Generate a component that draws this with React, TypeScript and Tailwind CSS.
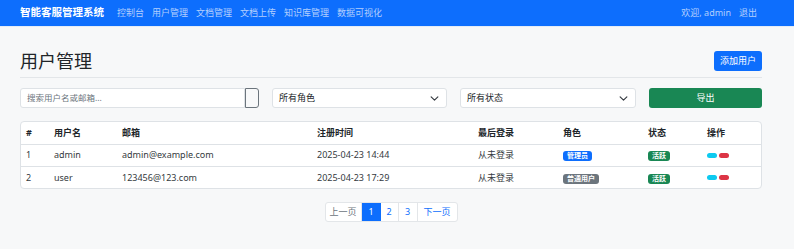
import React from "react";

const font = { fontFamily: '"Noto Sans", "Noto Sans CJK SC", sans-serif' };

function Chevron() {
  return (
    <svg width="9" height="9" viewBox="0 0 16 16" fill="none" stroke="#343a40" strokeWidth="2" strokeLinecap="round" strokeLinejoin="round">
      <path d="M2 5l6 6 6-6" />
    </svg>
  );
}

const users = [
  { id: 1, name: "admin", email: "admin@example.com", reg: "2025-04-23 14:44", last: "从未登录", role: "管理员", admin: true },
  { id: 2, name: "user", email: "123456@123.com", reg: "2025-04-23 17:29", last: "从未登录", role: "普通用户", admin: false },
];

export default function App() {
  return (
    <div className="w-[794px] h-[249px] bg-[#f7f8f9] text-[#212529] overflow-hidden" style={font}>
      <nav className="h-[27px] bg-[#0d6efd] flex items-center pl-[20px] pr-[37px] border-b border-[#e3ecf7]">
        <span className="text-white font-bold text-[10.5px] mr-[13px]">智能客服管理系统</span>
        <div className="flex gap-[8px] text-[9px] text-[#b3cffd]">
          <span>控制台</span>
          <span>用户管理</span>
          <span>文档管理</span>
          <span>文档上传</span>
          <span>知识库管理</span>
          <span>数据可视化</span>
        </div>
        <div className="ml-auto flex gap-[8px] text-[9px] text-[#b3cffd]">
          <span>欢迎, admin</span>
          <span>退出</span>
        </div>
      </nav>

      <div className="ml-[20px] w-[742px]">
        <div className="flex items-center justify-between h-[51px] pt-[22px] pb-[2px] border-b border-[#e3e6e9]">
          <h1 className="text-[18px] leading-none text-[#212529] -mt-[2px]">用户管理</h1>
          <button className="h-[20px] px-[6px] rounded-[3px] bg-[#0d6efd] text-white text-[9px] -mt-[2px]">添加用户</button>
        </div>

        <div className="grid grid-cols-[239px_175px_176px_113px] gap-[13px] mt-[10px] h-[20px]">
          <div className="flex h-[20px]">
            <div className="flex-1 bg-white border border-[#dee2e6] rounded-l-[3px] flex items-center px-[6px] text-[8.5px] text-[#6c757d]">
              搜索用户名或邮箱...
            </div>
            <div className="w-[14px] border border-[#6c757d] rounded-r-[3px] bg-[#f8f9fa]"></div>
          </div>
          <div className="bg-white border border-[#dee2e6] rounded-[3px] flex items-center justify-between pl-[6px] pr-[7px] text-[9px]">
            <span>所有角色</span>
            <Chevron />
          </div>
          <div className="bg-white border border-[#dee2e6] rounded-[3px] flex items-center justify-between pl-[6px] pr-[7px] text-[9px]">
            <span>所有状态</span>
            <Chevron />
          </div>
          <button className="bg-[#198754] rounded-[3px] text-white text-[9px]">导出</button>
        </div>

        <div className="mt-[13px] bg-white border border-[#dee2e6] rounded-[4px] overflow-hidden">
          <table className="w-full text-[9px] border-collapse table-fixed">
            <colgroup>
              <col className="w-[28px]" />
              <col className="w-[68px]" />
              <col className="w-[195px]" />
              <col className="w-[161px]" />
              <col className="w-[85px]" />
              <col className="w-[85px]" />
              <col className="w-[59px]" />
              <col className="w-[61px]" />
            </colgroup>
            <thead>
              <tr className="h-[22px] font-bold text-left">
                <th className="pl-[5px] font-bold">#</th>
                <th className="pl-[5px] font-bold">用户名</th>
                <th className="pl-[5px] font-bold">邮箱</th>
                <th className="pl-[5px] font-bold">注册时间</th>
                <th className="pl-[5px] font-bold">最后登录</th>
                <th className="pl-[5px] font-bold">角色</th>
                <th className="pl-[5px] font-bold">状态</th>
                <th className="pl-[5px] font-bold">操作</th>
              </tr>
            </thead>
            <tbody>
              {users.map((u) => (
                <tr key={u.id} className="h-[22px] border-t border-[#dee2e6] text-[#343a40]">
                  <td className="pl-[5px]">{u.id}</td>
                  <td className="pl-[5px]">{u.name}</td>
                  <td className="pl-[5px]">{u.email}</td>
                  <td className="pl-[5px]">{u.reg}</td>
                  <td className="pl-[5px]">{u.last}</td>
                  <td className="pl-[5px]">
                    <span className={`inline-block px-[4px] py-[1px] rounded-[3px] text-white text-[7px] font-bold leading-[8px] ${u.admin ? "bg-[#0d6efd]" : "bg-[#6c757d]"}`}>
                      {u.role}
                    </span>
                  </td>
                  <td className="pl-[5px]">
                    <span className="inline-block px-[4px] py-[1px] rounded-[3px] text-white text-[7px] font-bold leading-[8px] bg-[#198754]">活跃</span>
                  </td>
                  <td className="pl-[5px]">
                    <div className="flex gap-[2px] items-center">
                      <span className="block w-[10px] h-[5px] rounded-[3px] bg-[#0dcaf0]"></span>
                      <span className="block w-[10px] h-[5px] rounded-[3px] bg-[#dc3545]"></span>
                    </div>
                  </td>
                </tr>
              ))}
            </tbody>
          </table>
        </div>

        <div className="flex justify-center mt-[13px]">
          <div className="flex h-[20px] text-[9px] border border-[#e3e6e9] rounded-[3px] bg-white overflow-hidden">
            <span className="w-[36px] flex items-center justify-center text-[#6c757d] border-r border-[#e3e6e9]">上一页</span>
            <span className="w-[19px] flex items-center justify-center bg-[#0d6efd] text-white">1</span>
            <span className="w-[18px] flex items-center justify-center text-[#0d6efd] border-r border-[#e3e6e9]">2</span>
            <span className="w-[19px] flex items-center justify-center text-[#0d6efd] border-r border-[#e3e6e9]">3</span>
            <span className="w-[39px] flex items-center justify-center text-[#0d6efd]">下一页</span>
          </div>
        </div>
      </div>
    </div>
  );
}
